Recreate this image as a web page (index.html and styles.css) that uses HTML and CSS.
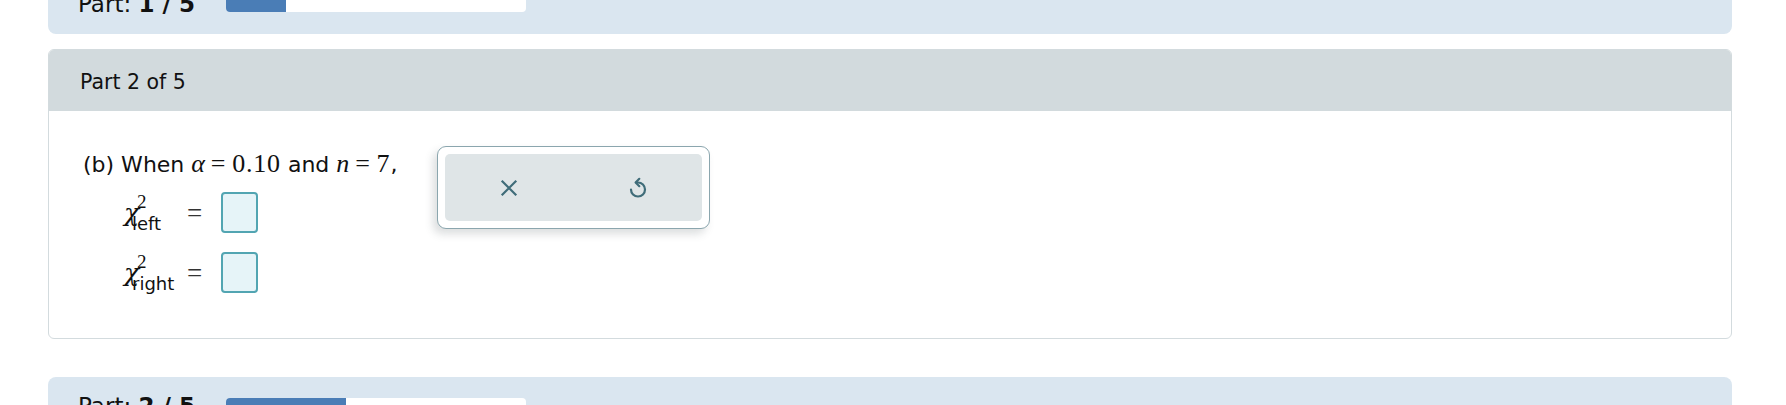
FILE: index.html
```html
<!DOCTYPE html>
<html lang="en">
<head>
<meta charset="utf-8">
<title>Part 2 of 5</title>
<link rel="stylesheet" href="styles.css">
</head>
<body>
<div class="page">
  <section class="partbar">
    <span class="plabel">Part: <b>1 / 5</b></span>
    <div class="progress"><div class="fill" style="width:20%"></div></div>
  </section>

  <section class="card">
    <header class="card-head">Part 2 of 5</header>
    <div class="card-body">
      <p class="question">(b) When <span class="math"><span class="mi">α</span><span class="mo">=</span><span class="mn">0.10</span></span> and <span class="math"><span class="mi">n</span><span class="mo">=</span><span class="mn">7</span></span>,</p>
      <div class="rows">
        <div class="row">
          <span class="lbl"><span class="chi">χ</span><span class="scripts"><span class="sup">2</span><span class="sub">left</span></span></span>
          <span class="eq">=</span>
          <span class="box"></span>
        </div>
        <div class="row">
          <span class="lbl"><span class="chi">χ</span><span class="scripts"><span class="sup">2</span><span class="sub">right</span></span></span>
          <span class="eq">=</span>
          <span class="box"></span>
        </div>
      </div>

      <div class="toolbar">
        <div class="tool-inner">
          <button class="tool" aria-label="Clear">
            <svg width="24" height="24" viewBox="0 0 24 24"><path d="M5.5 5.5L18.5 18.5M18.5 5.5L5.5 18.5" fill="none" stroke="#3f6c79" stroke-width="2.2" stroke-linecap="square"/></svg>
          </button>
          <button class="tool" aria-label="Undo">
            <svg width="24" height="24" viewBox="0 0 24 24"><path d="M12 6.5A7 7 0 1 1 5 13.5" fill="none" stroke="#3f6c79" stroke-width="2.2" stroke-linecap="round"/><path d="M13.3 2.8L9.6 6.5L13.3 10.2" fill="none" stroke="#3f6c79" stroke-width="2.2" stroke-linecap="round" stroke-linejoin="round"/><path d="M9.8 6.5H12" stroke="#3f6c79" stroke-width="2.2"/></svg>
          </button>
        </div>
      </div>
    </div>
  </section>

  <section class="partbar">
    <span class="plabel">Part: <b>2 / 5</b></span>
    <div class="progress"><div class="fill" style="width:40%"></div></div>
  </section>
</div>
</body>
</html>
```
FILE: styles.css
```css
* { box-sizing: border-box; }
html, body { margin: 0; padding: 0; background: #fff; overflow: hidden; }
body {
  font-family: "DejaVu Sans", Verdana, sans-serif;
  color: #111;
  width: 1786px;
  height: 405px;
}
.page {
  margin-left: 48px;
  width: 1684px;
  margin-top: -25px;
}
.partbar {
  background: #dae6f0;
  border-radius: 8px;
  height: 59px;
  padding: 21px 30px 0 30px;
  display: flex;
  align-items: flex-start;
}
.plabel {
  font-size: 23px;
  line-height: 16px;
  width: 148px;
  white-space: nowrap;
}
.plabel b { font-weight: bold; }
.progress {
  width: 300px;
  height: 16px;
  background: #fff;
  border-radius: 4px;
  overflow: hidden;
}
.fill {
  height: 100%;
  background: #4a7db6;
}
.card {
  margin-top: 15px;
  margin-bottom: 38px;
  border: 1px solid #d3dbde;
  border-radius: 6px;
}
.card-head {
  background: #d2dadd;
  height: 61px;
  padding-left: 31px;
  padding-top: 2px;
  display: flex;
  align-items: center;
  font-size: 20.5px;
  border-radius: 5px 5px 0 0;
}
.card-body {
  position: relative;
  padding: 39px 33px 45px 34px;
}
.question {
  margin: 0;
  font-size: 22px;
  line-height: 30px;
  height: 30px;
  white-space: nowrap;
}
.math {
  font-family: "Liberation Serif", "Times New Roman", serif;
  font-size: 26px;
  line-height: 0;
  letter-spacing: 0.8px;
}
.mi { font-style: italic; }
.mo { margin: 0 6px 0 5px; }
.rows {
  margin-top: 12px;
  padding-left: 39px;
  display: flex;
  flex-direction: column;
  gap: 19px;
}
.row {
  display: flex;
  align-items: flex-start;
  height: 41px;
}
.lbl {
  width: 65px;
  height: 41px;
  display: flex;
  align-items: flex-start;
}
.chi {
  font-family: "DejaVu Serif", "Liberation Serif", serif;
  font-style: italic;
  font-size: 25px;
  line-height: 25px;
  width: 9px;
  margin-top: 8px;
  padding-left: 2px;
  white-space: nowrap;
}
.scripts {
  display: flex;
  flex-direction: column;
  margin-left: 1px;
}
.sup {
  font-family: "Liberation Serif", "Times New Roman", serif;
  font-size: 19px;
  line-height: 19px;
  margin-left: 5px;
}
.sub {
  font-family: "DejaVu Sans", Verdana, sans-serif;
  font-size: 18px;
  line-height: 18px;
  margin-top: 4px;
}
.eq {
  font-family: "Liberation Serif", "Times New Roman", serif;
  font-size: 27px;
  line-height: 24px;
  width: 34px;
  margin-top: 9px;
  color: #333;
}
.box {
  width: 37px;
  height: 41px;
  border: 2px solid #52a5b2;
  background: #e6f4f8;
  border-radius: 4px;
}
.toolbar {
  position: absolute;
  left: 388px;
  top: 35px;
  width: 273px;
  height: 83px;
  border: 1px solid #8ba6ae;
  border-radius: 9px;
  background: #fff;
  padding: 7px;
  box-shadow: -4px 5px 9px rgba(60, 70, 80, 0.18);
}
.tool-inner {
  display: flex;
  height: 100%;
  background: #dfe5e7;
  border-radius: 5px;
}
.tool {
  flex: 1;
  border: 0;
  background: transparent;
  display: flex;
  align-items: center;
  justify-content: center;
  padding: 0;
  cursor: pointer;
}
```
